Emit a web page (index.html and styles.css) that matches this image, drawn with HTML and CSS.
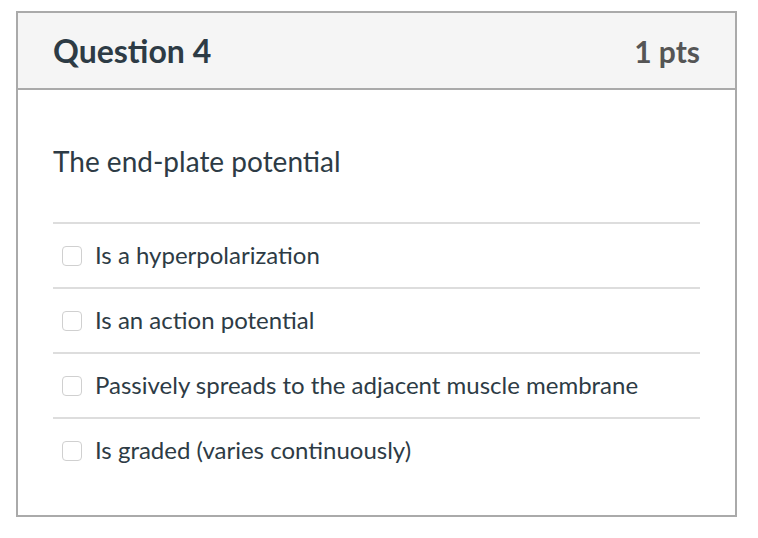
FILE: index.html
```html
<!DOCTYPE html>
<html>
<head>
<meta charset="utf-8">
<link rel="stylesheet" href="styles.css">
</head>
<body>
<div class="question">
  <div class="q-header">
    <h2 class="q-title">Question 4</h2>
    <span class="q-points">1 pts</span>
  </div>
  <div class="q-body">
    <p class="q-text">The end-plate potential</p>
    <div class="answers">
      <label class="answer"><span class="box"></span><span class="answer-text">Is a hyperpolarization</span></label>
      <label class="answer"><span class="box"></span><span class="answer-text">Is an action potential</span></label>
      <label class="answer"><span class="box"></span><span class="answer-text">Passively spreads to the adjacent muscle membrane</span></label>
      <label class="answer"><span class="box"></span><span class="answer-text">Is graded (varies continuously)</span></label>
    </div>
  </div>
</div>
</body>
</html>
```
FILE: styles.css
```css
html, body {
  margin: 0;
  padding: 0;
  background: #fff;
}
body {
  font-family: Lato, "Open Sans", sans-serif;
  color: #2d3b45;
  padding: 11px 21px 0 16px;
}
.question {
  border: 2px solid #aaaaaa;
  width: 721px;
  box-sizing: border-box;
}
.q-header {
  background: #f5f5f5;
  border-bottom: 2px solid #aaaaaa;
  height: 77px;
  box-sizing: border-box;
  display: flex;
  align-items: center;
  justify-content: space-between;
  padding: 0 35px;
}
.q-title {
  margin: 0;
  font-size: 32px;
  font-weight: 700;
  color: #2d3b45;
}
.q-points {
  font-size: 30px;
  font-weight: 700;
  color: #555555;
}
.q-body {
  padding: 35px 35px 33px;
}
.q-text {
  margin: 18px 0 43px;
  font-size: 28px;
  line-height: 36px;
}
.answers {
  display: flex;
  flex-direction: column;
}
.answer {
  border-top: 2px solid #dddddd;
  height: 65px;
  box-sizing: border-box;
  display: flex;
  align-items: center;
  padding-left: 9px;
  padding-bottom: 2px;
  gap: 13px;
}
.box {
  width: 18px;
  height: 18px;
  border: 1px solid #d0d0d0;
  border-radius: 4px;
  background: #fff;
  flex: none;
  margin-top: 2px;
}
.answer-text {
  font-size: 24px;
}
```
